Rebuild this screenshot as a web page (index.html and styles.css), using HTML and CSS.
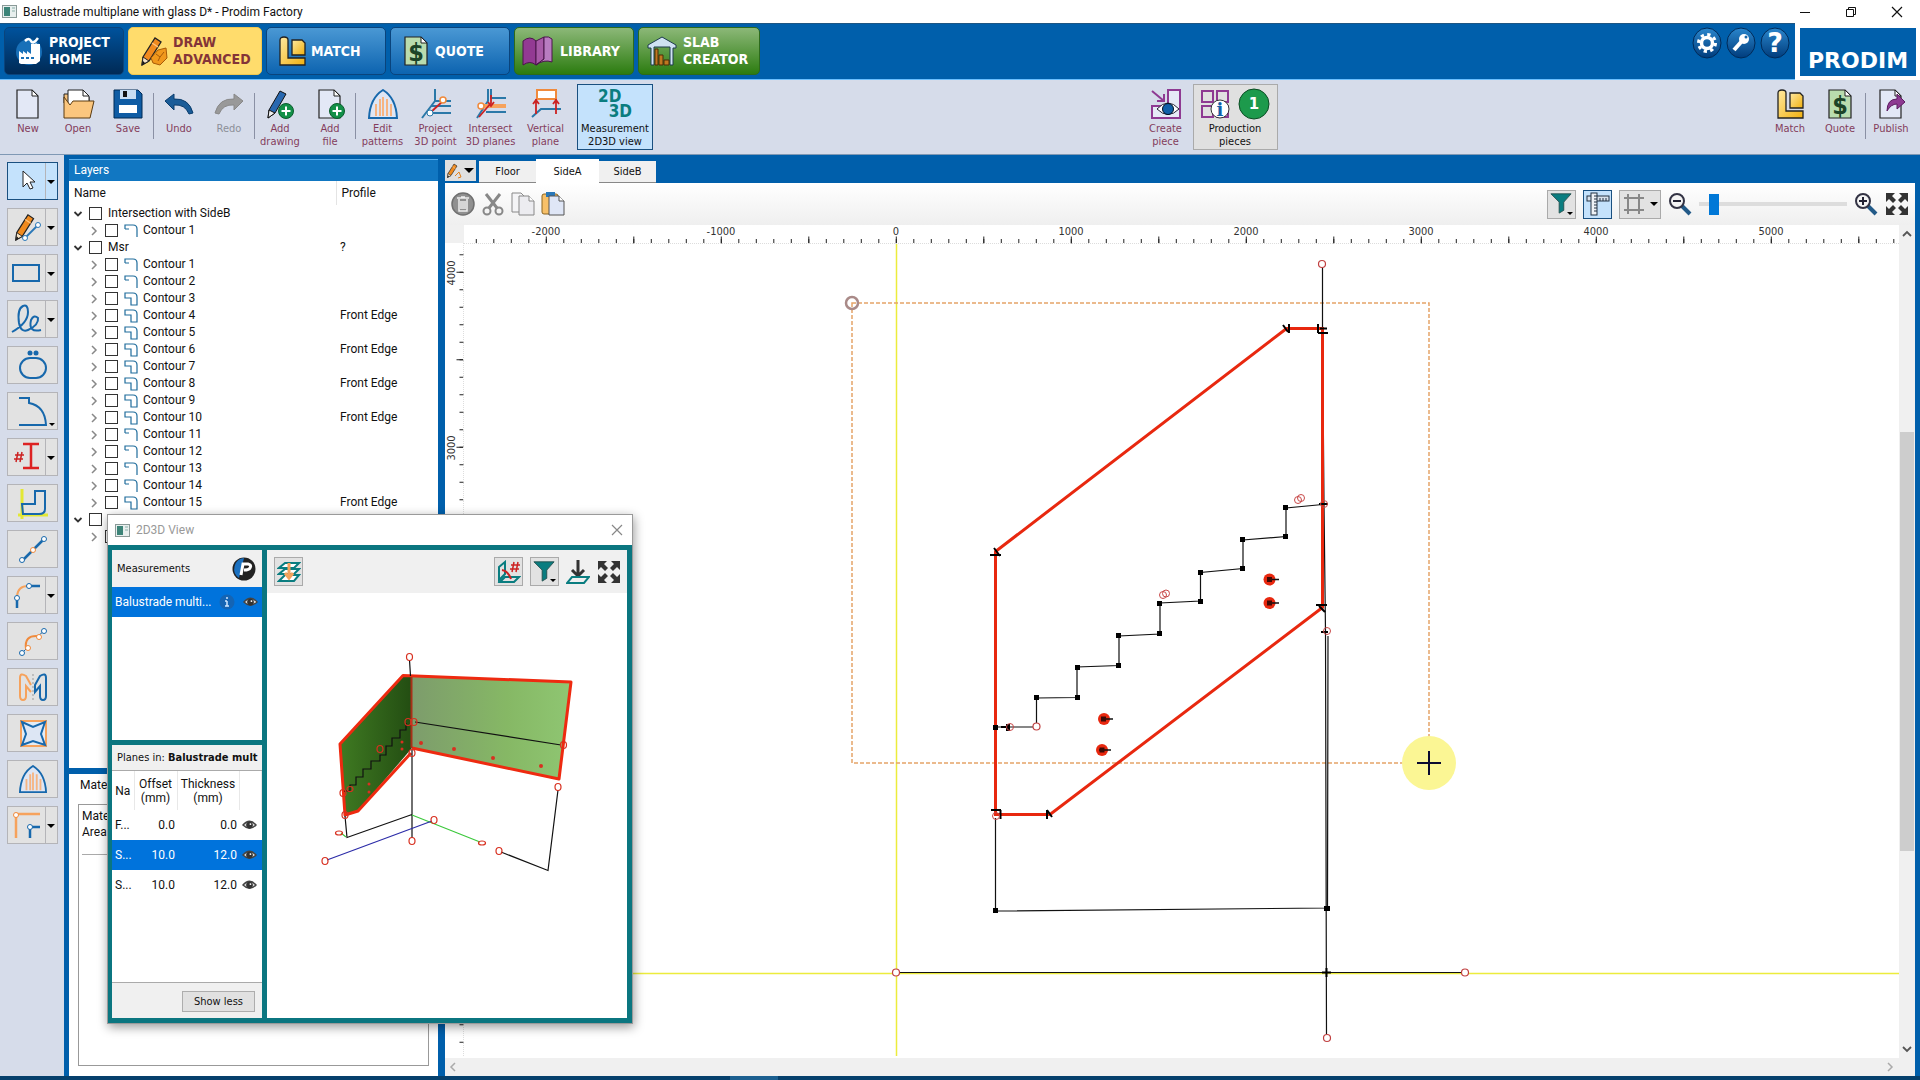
FILE: index.html
```html
<!DOCTYPE html>
<html lang="en">
<head>
    <meta charset="UTF-8">
    <meta name="viewport" content="width=device-width, initial-scale=1.0">
    <title>Balustrade multiplane with glass D* - Prodim Factory</title>
    <link rel="stylesheet" href="styles.css">
</head>
<body>
    <!-- shared icons -->
    <svg class="defs" width="0" height="0">
        <defs>
            <linearGradient id="gold" x1="0" y1="0" x2="1" y2="1"><stop offset="0" stop-color="#ffe9a0"/><stop offset="1" stop-color="#f0b010"/></linearGradient>
            <linearGradient id="ball" x1="0" y1="0" x2="0" y2="1"><stop offset="0" stop-color="#2a86cc"/><stop offset="1" stop-color="#003c7c"/></linearGradient>
            <linearGradient id="leftGlass" x1="0" y1="0" x2="1" y2="0"><stop offset="0" stop-color="#3f7a22"/><stop offset="1" stop-color="#234d12"/></linearGradient>
            <linearGradient id="rightGlass" x1="0" y1="0" x2="1" y2="0"><stop offset="0" stop-color="#7d9c6c"/><stop offset="0.6" stop-color="#86b865"/><stop offset="1" stop-color="#8fc672"/></linearGradient>
            <symbol id="i-app" viewBox="0 0 15 13"><rect x="0.5" y="0.5" width="14" height="12" fill="#e8efee" stroke="#8a9a98"/><rect x="2" y="2" width="6" height="9" fill="#3c8478"/><path d="M10 3h3M10 6h3" stroke="#8ab0aa"/></symbol>
            <symbol id="i-match" viewBox="0 0 30 30"><path d="M3 4Q3 1 7 1T11 4V22H28V29H3z" fill="url(#gold)" stroke="#222" stroke-width="1.3"/><path d="M15 4h10l3 3v12H15z" fill="url(#gold)" stroke="#222" stroke-width="1.3"/></symbol>
            <symbol id="i-quote" viewBox="0 0 30 30"><path d="M4 1h16l6 6v22H4z" fill="#b9dcae" stroke="#222" stroke-width="1.2"/><path d="M20 1v6h6z" fill="#fff" stroke="#222"/><text x="15" y="25" text-anchor="middle" class="dollar">$</text></symbol>
            <symbol id="i-page" viewBox="0 0 30 30"><path d="M4 1h15l6 6v22H4z" fill="#e3e8f6" stroke="#222" stroke-width="1.2"/><path d="M19 1v6h6z" fill="#fff" stroke="#222"/></symbol>
            <symbol id="i-pencil" viewBox="0 0 30 30"><path d="M4 21L16 2l6 4L10 25l-7 4z" fill="#f08a1e" stroke="#222" stroke-width="1.3"/><path d="M4 21l6 4-7 4z" fill="#f6e2c4" stroke="#222"/><path d="M3 29l1-4 2 2z" fill="#111"/><path d="M13 7l6 4" stroke="#ffc27a" stroke-width="1.5"/></symbol>
            <symbol id="i-plus" viewBox="0 0 16 16"><circle cx="8" cy="8" r="7.5" fill="#129048" stroke="#0a5c2c"/><path d="M8 3.500v9M3.500 8h9" stroke="#fff" stroke-width="2"/></symbol>
            <symbol id="i-arch" viewBox="0 0 30 30"><path d="M1 29Q2 9 15 1Q28 9 29 29z" fill="#dfe6f4" stroke="#1768ac" stroke-width="2"/><path d="M8 27V15M12 27V10M15 27V8M19 27V10M23 27V15" stroke="#f6b482" stroke-width="2"/></symbol>
            <symbol id="i-open" viewBox="0 0 14 14"><path d="M1 5V1h8q4 0 4 4v8M1 5h4" fill="none" stroke="#1f6c9c" stroke-width="1.2"/></symbol>
            <symbol id="i-closed" viewBox="0 0 14 14"><path d="M1 6V1h8q4 0 4 4v8H7V6z" fill="none" stroke="#1f6c9c" stroke-width="1.2"/></symbol>
            <symbol id="i-down" viewBox="0 0 10 10"><path d="M1.500 3L5 6.500 8.500 3" fill="none" stroke="#333" stroke-width="1.8"/></symbol>
            <symbol id="i-right" viewBox="0 0 10 10"><path d="M3 1l4 4-4 4" fill="none" stroke="#888" stroke-width="1.5"/></symbol>
            <symbol id="i-eye" viewBox="0 0 16 12"><path d="M1 6Q8-2 15 6Q8 13 1 6z" fill="#ddd" stroke="#444" stroke-width="1.4"/><circle cx="8" cy="6" r="3.600" fill="#333"/><circle cx="9" cy="5" r="1" fill="#fff"/></symbol>
            <symbol id="i-funnel" viewBox="0 0 24 24"><path d="M1 2h22l-8 9v9l-5 3V11z" fill="#0a7d80" stroke="#24504f"/></symbol>
            <symbol id="i-expand" viewBox="0 0 24 24"><path d="M1 1h9L7 4l4 4-3 3-4-4-3 3zM23 1h-9l3 3-4 4 3 3 4-4 3 3zM1 23h9l-3-3 4-4-3-3-4 4-3-3zM23 23h-9l3-3-4-4 3-3 4 4 3-3z" fill="#333"/></symbol>
            <symbol id="i-hash" viewBox="0 0 10 12"><path d="M4 1L2 11M8 1L6 11M1 4h9M0 8h9" stroke="#c22" stroke-width="1.5"/></symbol>
        </defs>
    </svg>

    <header class="titlebar">
        <svg class="app-icon"><use href="#i-app"/></svg>
        <h1>Balustrade multiplane with glass D* - Prodim Factory</h1>
        <div class="window-buttons">
            <button aria-label="Minimize"><svg width="12" height="12"><path d="M1 6.500h10" stroke="#111"/></svg></button>
            <button aria-label="Restore"><svg width="12" height="12"><path d="M1.500 3.500h7v7h-7zM3.500 3V1.500h7v7H9" fill="none" stroke="#111"/></svg></button>
            <button aria-label="Close"><svg width="12" height="12"><path d="M1 1l10 10M11 1L1 11" stroke="#111" stroke-width="1.200"/></svg></button>
        </div>
    </header>

    <nav class="modes">
        <button class="mode home"><svg class="icon"><circle cx="14" cy="16" r="13" fill="#1870b8"/><path d="M4 27V15l4 3v-3l4 3v-3l4 3V8h4l1-1 1 1h3v17l-4 3H6z" fill="#fff"/><path d="M10 5q4-4 6 0t7-3" stroke="#fff" stroke-width="2.500" fill="none"/><path d="M6 22h3M11 22h3M16 22h3" stroke="#1870b8" stroke-width="2"/></svg><span>PROJECT<br>HOME</span></button>
        <button class="mode draw"><svg class="icon"><use href="#i-pencil" width="30" height="30"/><path d="M12 22l7-8 8-2 1 10-7 7-7-2z" fill="#f0981c" stroke="#a65a08"/><path d="M17 18l4 3 4-5M19 25l2-4" stroke="#a65a08" fill="none"/></svg><span>DRAW<br>ADVANCED</span></button>
        <button class="mode"><svg class="icon"><use href="#i-match" width="30" height="30"/></svg><span>MATCH</span></button>
        <button class="mode"><svg class="icon"><use href="#i-quote" width="30" height="30"/></svg><span>QUOTE</span></button>
        <button class="mode green library"><svg class="icon"><path d="M1 5q7-6 13 0v24q-6-5-13 0z" fill="#933a93" stroke="#4b144b"/><path d="M14 5l8-4v22l-8 6z" fill="#a85aa8" stroke="#4b144b"/><path d="M22 1q5-1 8 2v23q-8-3-16 3l8-6z" fill="#b87cc0" stroke="#4b144b"/></svg><span>LIBRARY</span></button>
        <button class="mode green slab"><svg class="icon"><path d="M1 9L15 1l14 8v3h-3v17h-3V11H7v18H4V12H1z" fill="#cfe2f2" stroke="#1d3a4c"/><path d="M8 13h3v16H8zM12 19h4v10h-4zM17 24h5v5h-5z" fill="#c07820" stroke="#4a2c08"/></svg><span>SLAB<br>CREATOR</span></button>
        <div class="help">
            <button aria-label="Settings"><svg width="30" height="32"><ellipse cx="15" cy="16" rx="14" ry="15" fill="url(#ball)" stroke="#002a58"/><circle cx="15" cy="16" r="5.500" fill="none" stroke="#fff" stroke-width="3.500"/><circle cx="15" cy="16" r="8.500" fill="none" stroke="#fff" stroke-width="3" stroke-dasharray="3.300 3.370"/></svg></button>
            <button aria-label="License"><svg width="30" height="32"><ellipse cx="15" cy="16" rx="14" ry="15" fill="url(#ball)" stroke="#002a58"/><circle cx="18" cy="12" r="5" fill="#fff"/><path d="M16 14l-8 9" stroke="#fff" stroke-width="4"/><circle cx="20" cy="10" r="1.500" fill="#1768ac"/></svg></button>
            <button aria-label="Help"><svg width="30" height="32"><ellipse cx="15" cy="16" rx="14" ry="15" fill="url(#ball)" stroke="#002a58"/><text x="15" y="25" text-anchor="middle" class="question">?</text></svg></button>
        </div>
        <div class="brand"><strong>PRODIM</strong></div>
    </nav>

    <div class="toolbar">
        <div class="group">
            <button class="tool"><svg class="icon"><use href="#i-page" width="30" height="30"/></svg>New</button>
            <button class="tool"><svg class="icon"><path d="M1 5h5l2 3h18v6H1z" fill="#f7c27c" stroke="#222"/><path d="M5 1h15l6 6v10H5z" fill="#fff" stroke="#222"/><path d="M20 1v6h6" fill="none" stroke="#222"/><path d="M1 8v21h26l4-17H10l-3 4z" fill="#fbc67e" stroke="#5a3a10"/></svg>Open</button>
            <button class="tool"><svg class="icon"><path d="M1 1h24l4 4v24H1z" fill="#0f5ca4" stroke="#002a55"/><rect x="7" y="1" width="16" height="9" fill="#c8ddf2"/><rect x="10" y="2" width="4" height="6" fill="#111"/><rect x="6" y="16" width="18" height="8" fill="#fff"/></svg>Save</button>
            <hr>
            <button class="tool"><svg class="icon"><path d="M1 12L10 5v5q15-1 19 14l-4 1Q21 15 10 16v5z" fill="#1a5c98" stroke="#0a3c6c"/></svg>Undo</button>
            <button class="tool disabled" disabled><svg class="icon"><path d="M29 12L20 5v5Q5 9 1 24l4 1Q9 15 20 16v5z" fill="#999" stroke="#888"/></svg>Redo</button>
            <hr>
            <button class="tool"><svg class="icon"><path d="M4 21L15 2l6 3L10 24l-7 5z" fill="#2868b0" stroke="#111"/><path d="M4 21l6 3-7 5z" fill="#eee" stroke="#111"/><use href="#i-plus" x="13" y="14" width="16" height="16"/></svg>Add<br>drawing</button>
            <button class="tool"><svg class="icon"><use href="#i-page" width="30" height="30"/><use href="#i-plus" x="14" y="14" width="16" height="16"/></svg>Add<br>file</button>
            <hr>
            <button class="tool roomy"><svg class="icon"><use href="#i-arch" width="30" height="30"/></svg>Edit<br>patterns</button>
            <button class="tool roomy"><svg class="icon"><path d="M14 0v12h16M14 12L1 29M10 17h20M6 24h24" stroke="#2a78a8" stroke-width="2" fill="none"/><path d="M10 23L22 12" stroke="#c22" stroke-width="1.800"/><circle cx="22" cy="11" r="3" fill="#fff" stroke="#f08a3c" stroke-width="1.500"/><circle cx="9" cy="24" r="3" fill="#fff" stroke="#2a78a8"/></svg>Project<br>3D point</button>
            <button class="tool intersect"><svg class="icon"><path d="M15 0v9h15M12 0v12L1 29M10 23h20" stroke="#2a78a8" stroke-width="2" fill="none"/><path d="M5 17h25" stroke="#f6a25c" stroke-width="4"/><circle cx="5" cy="17" r="3" fill="#fff" stroke="#f08a3c" stroke-width="1.500"/><path d="M3 28L15 14V6M12 13l3 4 3-4" stroke="#c22" stroke-width="1.800" fill="none"/></svg>Intersect<br>3D planes</button>
            <button class="tool roomy"><svg class="icon"><path d="M1 28L10 20H30" stroke="#2a78a8" stroke-width="2" fill="none"/><rect x="6" y="1" width="19" height="9" fill="#fff" stroke="#f08a3c" stroke-width="2"/><path d="M5 25V10M25 25V10M2 15l3-4 3 4M22 15l3-4 3 4" stroke="#c22" stroke-width="1.800" fill="none"/></svg>Vertical<br>plane</button>
            <button class="tool active"><span class="dims"><b>2D</b><b>3D</b></span>Measurement<br>2D3D view</button>
        </div>
        <div class="group">
            <button class="tool"><svg class="icon"><path d="M17 1h12v28H1V17h16z" fill="#e6eaf6" stroke="#8e3a92" stroke-width="2"/><path d="M1 2l12 10M13 5v7H6" stroke="#8e3a92" stroke-width="2" fill="none"/><path d="M6 20q11-12 22 0q-11 11-22 0z" fill="#fff" stroke="#223"/><circle cx="17" cy="20" r="5.500" fill="#1060a8" stroke="#012"/></svg>Create<br>piece</button>
            <button class="tool pieces"><svg class="icon double"><path d="M2 2h11v11H2zM17 2h11v11H17zM2 17h11v11H2zM17 17h11v11H17z" fill="none" stroke="#8e3a92" stroke-width="2"/><circle cx="20" cy="20" r="9" fill="#fff" stroke="#333"/><text x="20" y="27" text-anchor="middle" class="info">i</text><circle cx="54" cy="15" r="15" fill="#1d9a4c" stroke="#0c4c24"/><text x="54" y="20" text-anchor="middle" class="count">1</text></svg>Production<br>pieces</button>
        </div>
        <div class="group">
            <button class="tool"><svg class="icon"><use href="#i-match" width="30" height="30"/></svg>Match</button>
            <button class="tool"><svg class="icon"><use href="#i-quote" width="30" height="30"/></svg>Quote</button>
            <hr>
            <button class="tool"><svg class="icon"><use href="#i-page" width="30" height="30"/><path d="M11 22q0-12 10-12V5l8 8-8 7v-5q-6 0-10 7z" fill="#8e3a92" stroke="#5c1c60"/></svg>Publish</button>
        </div>
    </div>

    <main class="workspace">
        <aside class="sidebar">
            <button class="side drop active" aria-label="Select"><svg class="face"><path d="M11 4v16l4-4 3 6 3-1-3-6h5z" fill="#fff" stroke="#222"/></svg></button>
            <button class="side drop" aria-label="Draw"><svg class="face"><use href="#i-pencil" x="1" y="0" width="28" height="28"/><path d="M14 24L25 13" stroke="#2a78b8" stroke-width="1.800"/><circle cx="13" cy="25" r="2.500" fill="#fff" stroke="#2a78b8"/><circle cx="26" cy="12" r="2.500" fill="#fff" stroke="#2a78b8"/></svg></button>
            <button class="side drop" aria-label="Rectangle"><svg class="face"><rect x="1" y="6" width="26" height="16" fill="none" stroke="#1768ac" stroke-width="2"/></svg></button>
            <button class="side drop" aria-label="Freehand"><svg class="face"><path d="M0 27Q16 18 16 7Q16-1 11 1Q5 4 7 18Q9 28 16 25Q27 20 26 13Q22 9 19 15Q16 28 29 25" fill="none" stroke="#1768ac" stroke-width="2"/></svg></button>
            <button class="side" aria-label="Closed shape"><svg class="face"><circle cx="12" cy="2" r="2.500" fill="#1768ac"/><circle cx="18" cy="2" r="2.500" fill="#1768ac"/><rect x="2" y="7" width="26" height="20" rx="10" fill="none" stroke="#1768ac" stroke-width="2"/></svg></button>
            <button class="side" aria-label="Profile"><svg class="face"><path d="M1 1h10v5q16 3 17 22H1" fill="none" stroke="#1768ac" stroke-width="2"/></svg><i class="corner"></i></button>
            <button class="side drop" aria-label="Dimension"><svg class="face"><path d="M11 1h16M19 1v24M11 25h16" stroke="#d22" stroke-width="2.500"/><use href="#i-hash" x="2" y="8" width="10" height="12"/></svg></button>
            <button class="side" aria-label="Align axes"><svg class="face"><path d="M4 0v30M0 26h30" stroke="#e3e834" stroke-width="3"/><path d="M4 15h13V2h10v18q0 5-6 5H5z" fill="none" stroke="#1768ac" stroke-width="2"/></svg></button>
            <button class="side" aria-label="Line"><svg class="face"><path d="M4 26L26 4" stroke="#1768ac" stroke-width="2.500"/><circle cx="4" cy="25" r="2.500" fill="#fff" stroke="#1768ac"/><circle cx="15" cy="15" r="2.500" fill="#fff" stroke="#f08a3c"/><circle cx="26" cy="4" r="2.500" fill="#fff" stroke="#1768ac"/></svg></button>
            <button class="side drop" aria-label="Fillet"><svg class="face"><path d="M5 15Q6 5 16 5" stroke="#f6a25c" stroke-width="2" fill="none"/><path d="M18 5h10M5 17v10" stroke="#1768ac" stroke-width="2.500"/><circle cx="17" cy="5" r="2.500" fill="#fff" stroke="#1768ac"/><circle cx="5" cy="17" r="2.500" fill="#fff" stroke="#1768ac"/></svg></button>
            <button class="side" aria-label="Spline"><svg class="face"><path d="M8 22Q6 8 20 9" stroke="#f08a3c" stroke-width="2" fill="none"/><path d="M4 26l6-6M20 9l6-5" stroke="#1768ac"/><circle cx="4" cy="26" r="2.500" fill="#fff" stroke="#1768ac"/><circle cx="10" cy="21" r="2.500" fill="#fff" stroke="#f08a3c"/><circle cx="21" cy="10" r="2.500" fill="#fff" stroke="#f08a3c"/><circle cx="26" cy="4" r="2.500" fill="#fff" stroke="#1768ac"/></svg></button>
            <button class="side" aria-label="Mirror"><svg class="face"><path d="M13 12L8 3Q2-1 2 5v18q0 4 3 4t3-4V13l5 6" fill="none" stroke="#f6a25c" stroke-width="2"/><path d="M15 1v26" stroke="#999" stroke-dasharray="2 2"/><path d="M17 12l5-9q6-4 6 2v18q0 4-3 4t-3-4V13l-5 6z" fill="none" stroke="#1768ac" stroke-width="2"/></svg></button>
            <button class="side" aria-label="Bounding box"><svg class="face"><rect x="3" y="2" width="25" height="25" fill="#e2ecf6" stroke="#f6a25c" stroke-width="2"/><path d="M4 3l11 5 12-5-4 12 4 11-12-4-11 4 4-11z" fill="#dde6f4" stroke="#1768ac" stroke-width="2"/></svg></button>
            <button class="side" aria-label="Pattern"><svg class="face"><use href="#i-arch" x="1" y="0" width="28" height="28"/></svg></button>
            <button class="side drop" aria-label="Offset"><svg class="face"><path d="M4 27V3h24" stroke="#f6a25c" stroke-width="2.500" fill="none"/><path d="M18 27V16h10" stroke="#1768ac" stroke-width="2.500" fill="none"/><circle cx="4" cy="4" r="2.500" fill="#fff" stroke="#f08a3c"/><circle cx="18" cy="16" r="2.500" fill="#fff" stroke="#1768ac"/></svg></button>
        </aside>

        <section class="panels">
            <div class="layers">
                <h2>Layers</h2>
                <table>
                    <thead><tr><th>Name</th><th class="profile">Profile</th></tr></thead>
                    <tbody>
                        <tr><td><label><svg class="chev"><use href="#i-down"/></svg><input type="checkbox">Intersection with SideB</label></td><td></td></tr>
                        <tr><td><label class="child"><svg class="chev"><use href="#i-right"/></svg><input type="checkbox"><svg class="shape"><use href="#i-open"/></svg>Contour 1</label></td><td></td></tr>
                        <tr><td><label><svg class="chev"><use href="#i-down"/></svg><input type="checkbox">Msr</label></td><td>?</td></tr>
                        <tr><td><label class="child"><svg class="chev"><use href="#i-right"/></svg><input type="checkbox"><svg class="shape"><use href="#i-open"/></svg>Contour 1</label></td><td></td></tr>
                        <tr><td><label class="child"><svg class="chev"><use href="#i-right"/></svg><input type="checkbox"><svg class="shape"><use href="#i-open"/></svg>Contour 2</label></td><td></td></tr>
                        <tr><td><label class="child"><svg class="chev"><use href="#i-right"/></svg><input type="checkbox"><svg class="shape"><use href="#i-closed"/></svg>Contour 3</label></td><td></td></tr>
                        <tr><td><label class="child"><svg class="chev"><use href="#i-right"/></svg><input type="checkbox"><svg class="shape"><use href="#i-closed"/></svg>Contour 4</label></td><td>Front Edge</td></tr>
                        <tr><td><label class="child"><svg class="chev"><use href="#i-right"/></svg><input type="checkbox"><svg class="shape"><use href="#i-closed"/></svg>Contour 5</label></td><td></td></tr>
                        <tr><td><label class="child"><svg class="chev"><use href="#i-right"/></svg><input type="checkbox"><svg class="shape"><use href="#i-closed"/></svg>Contour 6</label></td><td>Front Edge</td></tr>
                        <tr><td><label class="child"><svg class="chev"><use href="#i-right"/></svg><input type="checkbox"><svg class="shape"><use href="#i-closed"/></svg>Contour 7</label></td><td></td></tr>
                        <tr><td><label class="child"><svg class="chev"><use href="#i-right"/></svg><input type="checkbox"><svg class="shape"><use href="#i-closed"/></svg>Contour 8</label></td><td>Front Edge</td></tr>
                        <tr><td><label class="child"><svg class="chev"><use href="#i-right"/></svg><input type="checkbox"><svg class="shape"><use href="#i-closed"/></svg>Contour 9</label></td><td></td></tr>
                        <tr><td><label class="child"><svg class="chev"><use href="#i-right"/></svg><input type="checkbox"><svg class="shape"><use href="#i-closed"/></svg>Contour 10</label></td><td>Front Edge</td></tr>
                        <tr><td><label class="child"><svg class="chev"><use href="#i-right"/></svg><input type="checkbox"><svg class="shape"><use href="#i-open"/></svg>Contour 11</label></td><td></td></tr>
                        <tr><td><label class="child"><svg class="chev"><use href="#i-right"/></svg><input type="checkbox"><svg class="shape"><use href="#i-open"/></svg>Contour 12</label></td><td></td></tr>
                        <tr><td><label class="child"><svg class="chev"><use href="#i-right"/></svg><input type="checkbox"><svg class="shape"><use href="#i-open"/></svg>Contour 13</label></td><td></td></tr>
                        <tr><td><label class="child"><svg class="chev"><use href="#i-right"/></svg><input type="checkbox"><svg class="shape"><use href="#i-open"/></svg>Contour 14</label></td><td></td></tr>
                        <tr><td><label class="child"><svg class="chev"><use href="#i-right"/></svg><input type="checkbox"><svg class="shape"><use href="#i-closed"/></svg>Contour 15</label></td><td>Front Edge</td></tr>
                        <tr><td><label><svg class="chev"><use href="#i-down"/></svg><input type="checkbox" aria-label="Layer group"></label></td><td></td></tr>
                        <tr><td><label class="child"><svg class="chev"><use href="#i-right"/></svg><input type="checkbox" aria-label="Layer"></label></td><td></td></tr>
                    </tbody>
                </table>
            </div>
            <div class="material">
                <h2>Mater</h2>
                <div class="material-box">
                    <p>Mate<br>Area</p>
                    <hr>
                </div>
            </div>
        </section>

        <section class="drawing">
            <div class="tabs">
                <button class="tab-menu" aria-label="Drawing mode"><svg width="16" height="16"><use href="#i-pencil" width="15" height="15"/><path d="M9 13l4-4 2 5-3 1" fill="none" stroke="#e0801c"/></svg><i class="arrow"></i></button>
                <button class="tab">Floor</button>
                <button class="tab current">SideA</button>
                <button class="tab">SideB</button>
            </div>
            <div class="canvas-tools">
                <button class="flat" aria-label="Delete"><svg class="face"><circle cx="12" cy="12" r="11" fill="#909090" stroke="#707070" stroke-width="1.500"/><path d="M6 6h12M8 7v12h8V7M10 9v8M12 9v8M14 9v8M10 5h4" stroke="#eee" stroke-width="1.500" fill="none"/></svg></button>
                <button class="flat" aria-label="Cut"><svg class="face"><path d="M5 2l11 14M19 2L8 16" stroke="#888" stroke-width="3"/><circle cx="6" cy="19" r="3.500" fill="none" stroke="#888" stroke-width="2"/><circle cx="18" cy="19" r="3.500" fill="none" stroke="#888" stroke-width="2"/></svg></button>
                <button class="flat" aria-label="Copy"><svg class="face"><path d="M1 1h9l4 4v15H1z" fill="#f4f4f6" stroke="#888"/><path d="M8 4h10l5 5v14H8z" fill="#ececf0" stroke="#888"/><path d="M18 4v5h5" fill="#fff" stroke="#888"/></svg></button>
                <button class="flat" aria-label="Paste"><svg class="face"><rect x="1" y="2" width="16" height="20" rx="2" fill="#f7c068" stroke="#8a6420"/><rect x="5" y="0" width="9" height="5" fill="#2a78b8"/><path d="M8 4h10l5 5v14H8z" fill="#dfe6f6" stroke="#555"/><path d="M18 4v5h5" fill="#fff" stroke="#555"/></svg></button>
                <div class="view-tools">
                    <button class="boxed" aria-label="Filter"><svg class="face"><use href="#i-funnel" width="22" height="22"/></svg><i class="corner"></i></button>
                    <button class="boxed active" aria-label="Rulers"><svg class="face"><rect x="1" y="4" width="22" height="5" fill="#d9e2ec" stroke="#234"/><rect x="5" y="1" width="6" height="22" fill="#eef2f6" stroke="#234"/><path d="M8 4h3M8 7h3M8 10h3M8 13h3M8 16h3M8 19h3M14 6v3M17 6v3M20 6v3" stroke="#234"/></svg></button>
                    <button class="boxed split" aria-label="Grid"><svg class="face"><path d="M6 2v20M17 2v20M2 6h20M2 18h20" stroke="#888" stroke-width="2"/></svg><i class="arrow"></i></button>
                    <button class="flat" aria-label="Zoom out"><svg class="face"><path d="M14 14l8 8" stroke="#225a88" stroke-width="4"/><circle cx="9" cy="9" r="7" fill="#f4f4f4" stroke="#334" stroke-width="2"/><path d="M5 9h8" stroke="#223" stroke-width="2"/></svg></button>
                    <input type="range" min="0" max="100" value="7" aria-label="Zoom">
                    <button class="flat" aria-label="Zoom in"><svg class="face"><path d="M14 14l8 8" stroke="#225a88" stroke-width="4"/><circle cx="9" cy="9" r="7" fill="#f4f4f4" stroke="#334" stroke-width="2"/><path d="M5 9h8M9 5v8" stroke="#223" stroke-width="2"/></svg></button>
                    <button class="flat" aria-label="Fit"><svg class="face"><use href="#i-expand" width="24" height="24"/></svg></button>
                </div>
            </div>
            <div class="canvas">
                <svg class="plan">
                    <g transform="translate(-445 -225)">
                        <rect x="445" y="225" width="19" height="18" fill="#f0f0f0"/>
                        <!-- rulers: 175px per metre, a tick every 100mm -->
                        <g stroke="#222">
                            <path d="M475.800 241H1899" stroke-width="4" stroke-dasharray="1 16.500"/>
                            <path d="M545.800 240H1899" stroke-width="7" stroke-dasharray="1 86.500"/>
                            <path d="M461.500 254.300V1056" stroke-width="4" stroke-dasharray="1 16.500"/>
                            <path d="M460 271.800V1056" stroke-width="7" stroke-dasharray="1 86.500"/>
                        </g>
                        <path d="M464 243.500H1899M463.500 243V1056" stroke="#ddd" stroke-dasharray="1 1"/>
                        <g class="ruler-text">
                            <text x="546" y="235">-2000</text>
                            <text x="721" y="235">-1000</text>
                            <text x="896" y="235">0</text>
                            <text x="1071" y="235">1000</text>
                            <text x="1246" y="235">2000</text>
                            <text x="1421" y="235">3000</text>
                            <text x="1596" y="235">4000</text>
                            <text x="1771" y="235">5000</text>
                            <text transform="translate(455 273) rotate(-90)">4000</text>
                            <text transform="translate(455 448) rotate(-90)">3000</text>
                        </g>
                        <!-- axes -->
                        <path d="M896.500 244V1056M464 973.500H1899" stroke="#ecec3c" stroke-width="1.500"/>
                        <!-- selection rectangle -->
                        <rect x="852" y="303" width="577" height="460" fill="none" stroke="#e5a468" stroke-width="1.500" stroke-dasharray="4 2"/>
                        <circle cx="852" cy="303" r="6" fill="none" stroke="#a98a88" stroke-width="2.500"/>
                        <circle cx="1429" cy="763" r="27" fill="#fbf694"/>
                        <path d="M1417 763h24M1429 751v24" stroke="#0a0a30" stroke-width="2"/>
                        <!-- measured lines -->
                        <g fill="none" stroke="#111" stroke-width="1.200">
                            <path d="M1322.500 267V328L1324 504L1325.500 632L1326.500 1034"/>
                            <path d="M1328 636L1327.500 908L995.500 911V818"/>
                            <path d="M900 972.500H1461"/>
                            <path d="M996 727H1033M1036.500 723V698L1077 697.500V667L1119 665.500V636L1160 634V603L1200.500 601V572.500L1243 568.500V540L1286 536.500V508L1328 504"/>
                        </g>
                        <path d="M1286.500 328.500H1322.500V607.500L1050 814.500H995.500V551.500z" fill="none" stroke="#e8280f" stroke-width="3"/>
                        <!-- point markers -->
                        <g fill="#000">
                            <path d="M1034 695h5v5h-5zM1075 695h5v5h-5zM1075 665h5v5h-5zM1116 663h5v5h-5zM1116 633h5v5h-5zM1157 631h5v5h-5zM1157 601h5v5h-5zM1198 599h5v5h-5zM1198 570h5v5h-5zM1240 566h5v5h-5zM1240 537h5v5h-5zM1283 534h5v5h-5zM1283 505h5v5h-5zM993 725h5v5h-5zM993 908h5v5h-5zM1324 906h6v5h-6zM1006 724h4v7h-4z"/>
                        </g>
                        <path d="M990 555h11M994 548l6 8M1283 325l5 7M1289 324v9M1318 324v9M1320 328.500h7M1318 333h10M1316 605h11M1319 606l6 6M1319 504h9M1321 632h7M991 810h10M1000.500 810v9M1047 810v9M1047 810l5 7M1322 972.500h9M1326.500 968v9M1001 727h8" stroke="#000" stroke-width="2" fill="none"/>
                        <g fill="#fff" stroke="#c04040" stroke-width="1.200">
                            <circle cx="1322" cy="264" r="3.500"/><circle cx="1327" cy="1038" r="3.500"/>
                            <circle cx="896" cy="972.500" r="3.500"/><circle cx="1465" cy="972.500" r="3.500"/>
                            <circle cx="1036.500" cy="726.500" r="3.500"/>
                        </g>
                        <g fill="none" stroke="#c84848">
                            <circle cx="1298" cy="500" r="3.500"/><circle cx="1301" cy="498" r="3.500"/>
                            <circle cx="1163" cy="595" r="3.500"/><circle cx="1166" cy="593.500" r="3.500"/>
                            <circle cx="1327" cy="631" r="3.500"/><circle cx="1010" cy="727" r="3.500"/><circle cx="996" cy="816" r="3.500"/><circle cx="1324" cy="504" r="3.500"/>
                        </g>
                        <g fill="#e8280f">
                            <circle cx="1269.500" cy="579.500" r="6"/><circle cx="1269.500" cy="603" r="6"/><circle cx="1104" cy="719" r="6"/><circle cx="1102" cy="750" r="6"/>
                        </g>
                        <path d="M1267 579.500h12M1267 603h12M1101 719h12M1099 750h12" stroke="#111" stroke-width="1.500"/>
                        <path d="M1267 577h5v5h-5zM1267 600.500h5v5h-5zM1101 716.500h5v5h-5zM1099.500 747.500h5v5h-5z" fill="#3c0a06"/>
                    </g>
                </svg>
                <div class="scroll-y">
                    <svg width="10" height="10"><path d="M1 7l4-4 4 4" fill="none" stroke="#555" stroke-width="1.800"/></svg>
                    <div class="track"><div class="thumb"></div></div>
                    <svg width="10" height="10"><path d="M1 3l4 4 4-4" fill="none" stroke="#555" stroke-width="1.800"/></svg>
                </div>
                <div class="scroll-x">
                    <svg width="10" height="10"><path d="M7 1L3 5l4 4" fill="none" stroke="#aaa" stroke-width="1.500"/></svg>
                    <svg width="10" height="10"><path d="M3 1l4 4-4 4" fill="none" stroke="#aaa" stroke-width="1.500"/></svg>
                </div>
            </div>
        </section>
    </main>

    <footer class="taskbar"><span></span></footer>

    <!-- floating 2D3D window -->
    <section class="view-window">
        <div class="view-title">
            <svg class="app-icon"><use href="#i-app"/></svg>
            <h2>2D3D View</h2>
            <button aria-label="Close view"><svg width="12" height="12"><path d="M1 1l10 10M11 1L1 11" stroke="#888" stroke-width="1.200"/></svg></button>
        </div>
        <div class="view-body">
            <div class="view-left">
                <div class="measurements">
                    <div class="view-head"><h3>Measurements</h3><svg width="24" height="24"><circle cx="12" cy="12" r="11.500" fill="#222"/><path d="M12 1a11 11 0 0 0-5 20z" fill="#1a70c0"/><path d="M9 18l2-11h5q4 1 2 4-1 2-6 2" fill="none" stroke="#fff" stroke-width="3"/></svg></div>
                    <div class="measure-row"><span>Balustrade multi...</span><svg width="16" height="16"><circle cx="8" cy="8" r="7.500" fill="#1464b4"/><path d="M8 7v5M8 3v2M6 12h4M6 7h2" stroke="#cfe6ff" stroke-width="1.500"/></svg><svg class="eye"><use href="#i-eye"/></svg></div>
                </div>
                <div class="planes">
                    <h3>Planes in: <b>Balustrade mult</b></h3>
                    <table>
                        <thead><tr><th class="na">Na</th><th class="offset">Offset<br>(mm)</th><th class="thick">Thickness<br>(mm)</th><th></th></tr></thead>
                        <tbody>
                            <tr><td>F...</td><td class="num">0.0</td><td class="num">0.0</td><td class="see"><svg class="eye"><use href="#i-eye"/></svg></td></tr>
                            <tr class="selected"><td>S...</td><td class="num">10.0</td><td class="num">12.0</td><td class="see"><svg class="eye"><use href="#i-eye"/></svg></td></tr>
                            <tr><td>S...</td><td class="num">10.0</td><td class="num">12.0</td><td class="see"><svg class="eye"><use href="#i-eye"/></svg></td></tr>
                        </tbody>
                    </table>
                    <div class="view-foot"><button>Show less</button></div>
                </div>
            </div>
            <div class="view-right">
                <div class="view-tools-bar">
                    <button class="boxed first" aria-label="Stack planes"><svg class="face"><path d="M8 3h14l-5 5H2zM8 9h14l-5 5H2zM8 15h14l-5 6H2z" fill="#fff" stroke="#0a7d80" stroke-width="2"/><path d="M12 3v13M8 13l4 5 4-5" stroke="#f6a25c" stroke-width="3" fill="none"/></svg></button>
                    <button class="boxed" aria-label="Plane number"><svg class="face"><path d="M2 7l6-5v12l-6 6zM8 17h14l-5 5H3z" fill="none" stroke="#0a7d80" stroke-width="2"/><path d="M5 10q6 1 9 9" stroke="#c22" stroke-width="2" fill="none"/><use href="#i-hash" x="13" y="1" width="10" height="12"/></svg></button>
                    <button class="boxed" aria-label="Filter view"><svg class="face"><use href="#i-funnel" width="22" height="22"/></svg><i class="corner"></i></button>
                    <button class="flat" aria-label="Drop to plane"><svg class="face"><path d="M12 0v14M6 10l6 6 6-6" stroke="#333" stroke-width="3" fill="none"/><path d="M6 17h17l-5 6H1z" fill="none" stroke="#0a7d80" stroke-width="2"/></svg></button>
                    <button class="flat" aria-label="Fit view"><svg class="face"><use href="#i-expand" width="24" height="24"/></svg></button>
                </div>
                <svg class="model">
                    <g transform="translate(-267 -593)">
                        <path d="M411.500 676L571 682L559 779L412 748z" fill="url(#rightGlass)"/>
                        <path d="M403 675H411.500L412 748L358 811L345 815L340 744z" fill="url(#leftGlass)"/>
                        <path d="M411 753L358 811L345 815L340 744L403 675.500L571 682L559 779L412 748" fill="none" stroke="#ee2a10" stroke-width="3" stroke-linejoin="round"/>
                        <path d="M411.500 677V748" stroke="#a83018" stroke-width="2"/>
                        <g fill="none" stroke="#111" stroke-width="1.200">
                            <path d="M409.500 660L410.500 676M412 750V838M415 722L561 745M345 816L347 837.500L412 814.500M558 790L548 870.500L501 852"/>
                            <path d="M406 723V730H400V738H392V746H386V755H380V761H371V769H363V777H356V785H350V791H344"/>
                        </g>
                        <path d="M412 815L480 842M341 833l5 4" stroke="#3cc83c" stroke-width="1.200"/>
                        <path d="M327 860L432 821" stroke="#2c2ca8" stroke-width="1.200"/>
                        <g fill="none" stroke="#d83020" stroke-width="1.200">
                            <ellipse cx="409.500" cy="657" rx="3" ry="3.500"/><ellipse cx="412" cy="841" rx="3" ry="3.500"/><ellipse cx="412" cy="753" rx="3" ry="3.500"/>
                            <ellipse cx="408" cy="722" rx="3" ry="3.500"/><ellipse cx="414" cy="722" rx="3" ry="3.500"/><ellipse cx="563.500" cy="745" rx="3" ry="3.500"/>
                            <ellipse cx="558" cy="787" rx="3" ry="3.500"/><ellipse cx="499" cy="851" rx="3" ry="3.500"/><ellipse cx="325" cy="861" rx="3" ry="3.500"/>
                            <ellipse cx="434" cy="820" rx="3" ry="3.500"/><ellipse cx="482" cy="843" rx="3.500" ry="2"/><ellipse cx="339" cy="833" rx="3.500" ry="2"/>
                            <ellipse cx="345" cy="815" rx="3" ry="3.500"/><ellipse cx="343" cy="793" rx="3" ry="3.500"/><ellipse cx="380" cy="749" rx="3" ry="3.500"/><ellipse cx="350" cy="789" rx="3" ry="2.500"/>
                        </g>
                        <g fill="#d83020">
                            <circle cx="421" cy="743" r="2"/><circle cx="454" cy="749" r="2"/><circle cx="493" cy="758" r="2"/><circle cx="541" cy="766" r="2"/>
                            <circle cx="402" cy="742" r="1.500"/><circle cx="402" cy="749" r="1.500"/><circle cx="369" cy="784" r="1.500"/><circle cx="369" cy="792" r="1.500"/>
                        </g>
                    </g>
                </svg>
            </div>
        </div>
    </section>
</body>
</html>
```
FILE: styles.css
```css
* {
    box-sizing: border-box;
}

body {
    margin: 0;
    height: 100vh;
    display: flex;
    flex-direction: column;
    overflow: hidden;
    font-family: Roboto, "Open Sans", sans-serif;
    font-size: 12px;
    color: #111;
    background-color: #005fab;
}

h1, h2, h3, p {
    margin: 0;
    font-size: 12px;
    font-weight: normal;
}

button {
    margin: 0;
    padding: 0;
    border: none;
    background: none;
    color: inherit;
    font-family: inherit;
    font-size: inherit;
}

svg {
    display: block;
    flex: none;
}

.defs {
    position: absolute;
}

table {
    border-collapse: collapse;
    table-layout: fixed;
    width: 100%;
}

th, td {
    padding: 0;
    font-weight: normal;
    text-align: left;
}

.arrow, .corner {
    border: 5px solid transparent;
    border-top-color: #000;
    border-bottom: none;
}

.corner {
    position: absolute;
    right: 2px;
    bottom: 3px;
    border-width: 3px;
    border-bottom: none;
}

/* title bar */
.titlebar {
    height: 23px;
    flex: none;
    display: flex;
    align-items: center;
    background-color: #fff;
    padding-left: 2px;
}

.titlebar h1 {
    margin-left: 6px;
}

.app-icon {
    width: 15px;
    height: 13px;
}

.window-buttons {
    margin-left: auto;
    display: flex;
}

.window-buttons button {
    width: 46px;
    height: 21px;
    display: flex;
    align-items: center;
    justify-content: center;
}

/* mode buttons */
.modes {
    height: 57px;
    flex: none;
    display: flex;
    align-items: flex-start;
    gap: 4px;
    padding: 3px 0 0 4px;
    background-color: #005fab;
    border-top: 1px solid #1d5684;
    border-bottom: 1px solid #6cc0ff;
}

.mode {
    width: 120px;
    height: 48px;
    display: flex;
    align-items: center;
    gap: 4px;
    padding-left: 10px;
    border: 1px solid #0a447c;
    border-radius: 5px;
    background: linear-gradient(#4a98d4, #0d64b0);
    color: #fff;
    font-family: "DejaVu Sans Condensed", "DejaVu Sans", sans-serif;
    font-size: 14px;
    font-weight: bold;
    line-height: 17px;
    text-align: left;
}

.icon {
    width: 30px;
    height: 30px;
    overflow: visible;
}

.icon.double {
    width: 70px;
}

.home {
    background: linear-gradient(#00529c, #002a55);
}

.draw {
    width: 134px;
    background: #ffdc6c;
    border-color: #f0c850;
    color: #843438;
}

.green {
    background: linear-gradient(#8cb878, #2c7c10);
    border-color: #2c6a1c;
}

.library {
    padding-left: 7px;
    gap: 8px;
}

.slab {
    width: 122px;
    padding-left: 8px;
    gap: 6px;
}

.help {
    margin-left: auto;
    display: flex;
    gap: 4px;
    margin-right: 1px;
}

.brand {
    width: 125px;
    height: 57px;
    margin-top: -4px;
    padding: 5px 4px 4px 5px;
    background-color: #fff;
}

.brand strong {
    display: block;
    height: 48px;
    padding-top: 20px;
    background-color: #005fab;
    color: #fff;
    font-family: "DejaVu Sans", sans-serif;
    font-size: 22px;
    line-height: 26px;
    text-align: center;
}

/* main toolbar */
.toolbar {
    height: 75px;
    flex: none;
    display: flex;
    justify-content: space-between;
    padding: 4px 4px 0 3px;
    background-color: #d6dcea;
    border-bottom: 1px solid #7f98b4;
}

.group {
    display: flex;
}

.group hr {
    width: 1px;
    height: 46px;
    margin: 9px 0 0;
    border: none;
    background-color: #8a90a4;
}

.tool {
    min-width: 50px;
    height: 66px;
    display: flex;
    flex-direction: column;
    align-items: center;
    padding-top: 4px;
    border: 1px solid transparent;
    color: #843c5c;
    font-family: "DejaVu Sans Condensed", "DejaVu Sans", sans-serif;
    font-size: 11px;
    line-height: 13px;
}

.tool .icon {
    margin-bottom: 3px;
}

.tool.roomy {
    width: 53px;
}

.tool.intersect {
    width: 57px;
}

.tool.disabled {
    color: #8c8f98;
}

.tool.active {
    width: 76px;
    margin-left: 5px;
    background-color: #c4e2fc;
    border-color: #1a5080;
    color: #111;
}

.tool.pieces {
    width: 85px;
    margin-left: 2px;
    background-color: #e0e0e0;
    border-color: #aaa;
    color: #111;
}

.dims {
    width: 34px;
    height: 30px;
    display: flex;
    flex-direction: column;
    margin-bottom: 3px;
    color: #0a7d80;
    font-size: 17px;
    line-height: 15px;
    text-align: left;
}

.dims b + b {
    text-align: right;
}

.dollar {
    font: bold 25px "DejaVu Sans Condensed", sans-serif;
    fill: #1c4428;
}

.question {
    font: bold 27px "DejaVu Sans", sans-serif;
    fill: #fff;
}

.info {
    font: bold 18px "DejaVu Serif", serif;
    fill: #1060a8;
}

.count {
    font: bold 15px "DejaVu Sans", sans-serif;
    fill: #fff;
}

/* workspace */
.workspace {
    flex: 1;
    min-height: 0;
    display: flex;
}

.sidebar {
    width: 64px;
    flex: none;
    display: flex;
    flex-direction: column;
    gap: 8px;
    padding: 7px;
    background-color: #d6dcea;
}

.side {
    position: relative;
    width: 51px;
    height: 38px;
    flex: none;
    display: flex;
    align-items: center;
    justify-content: center;
    border: 1px solid #b4b4b8;
    background-color: #e2e2e2;
}

.side .face {
    width: 30px;
    height: 28px;
    overflow: visible;
}

.side.drop {
    justify-content: flex-start;
    padding-left: 4px;
}

.side.drop::before {
    content: "";
    position: absolute;
    right: 11px;
    top: 0;
    bottom: 0;
    border-left: 1px solid #b4b4b8;
}

.side.drop::after {
    content: "";
    position: absolute;
    right: 2px;
    top: 17px;
    border: 4px solid transparent;
    border-top-color: #000;
    border-bottom: none;
}

.side.active {
    background-color: #c4e2fc;
    border-color: #1a5080;
}

.panels {
    width: 369px;
    flex: none;
    display: grid;
    grid-template-rows: 1fr 302px;
    gap: 6px;
    margin: 4px 7px 0 5px;
}

.layers {
    background-color: #fff;
    overflow: hidden;
}

.layers h2 {
    height: 22px;
    padding-left: 5px;
    background-color: #1177c2;
    border-top: 1px solid #5cb0ee;
    color: #fff;
    line-height: 21px;
}

.layers th {
    height: 24px;
    padding: 0 0 0 5px;
}

.layers .profile {
    width: 102px;
    border-left: 1px solid #e4e4e4;
}

.layers td {
    height: 17px;
    line-height: 17px;
    padding-left: 4px;
}

.layers label {
    height: 17px;
    display: flex;
    align-items: center;
}

.layers .child {
    padding-left: 16px;
}

.layers input {
    appearance: none;
    width: 13px;
    height: 13px;
    flex: none;
    margin: 0 6px;
    border: 1px solid #333;
    background-color: #fff;
}

.chev {
    width: 10px;
    height: 10px;
}

.shape {
    width: 14px;
    height: 14px;
    margin-right: 5px;
}

.material {
    padding: 2px 9px 10px;
    background-color: #fff;
}

.material h2 {
    height: 28px;
    padding-left: 2px;
    line-height: 18px;
}

.material-box {
    height: 262px;
    padding: 3px;
    border: 1px solid #999;
}

.material-box p {
    line-height: 16px;
}

.material-box hr {
    margin: 14px 0 0;
    border: none;
    border-top: 1px solid #aaa;
}

/* drawing area */
.drawing {
    flex: 1;
    min-width: 0;
    display: flex;
    flex-direction: column;
    margin: 4px 5px 0 0;
}

.tabs {
    height: 24px;
    flex: none;
    display: flex;
    align-items: flex-end;
    font-family: "DejaVu Sans Condensed", "DejaVu Sans", sans-serif;
    font-size: 11px;
}

.tab-menu {
    width: 31px;
    height: 21px;
    display: flex;
    align-items: center;
    gap: 2px;
    padding-left: 1px;
    margin: 0 3px 2px 0;
    background-color: #e0e0e0;
}

.tab {
    width: 57px;
    height: 22px;
    background-color: #f0f0f0;
    border-bottom: 1px solid #888;
}

.tab.current {
    width: 63px;
    height: 24px;
    background-color: #fff;
    border-bottom: none;
}

.canvas-tools {
    height: 42px;
    flex: none;
    display: flex;
    align-items: center;
    gap: 6px;
    padding: 0 6px;
    background: linear-gradient(#fff, #efefef);
}

.view-tools {
    margin-left: auto;
    display: flex;
    align-items: center;
    gap: 7px;
}

.flat .face, .boxed .face {
    width: 24px;
    height: 24px;
}

.boxed {
    position: relative;
    width: 29px;
    height: 29px;
    display: flex;
    align-items: center;
    justify-content: center;
    border: 1px solid #aaa;
    background-color: #e2e2e2;
}

.boxed.active {
    background-color: #c4e2fc;
    border-color: #1a5080;
}

.boxed.split {
    width: 42px;
    gap: 4px;
}

.boxed .arrow {
    border-width: 4px;
    border-bottom: none;
}

.canvas-tools input {
    appearance: none;
    width: 148px;
    height: 21px;
    margin: 0;
    background: linear-gradient(#ddd, #ddd) center / 100% 4px no-repeat;
}

.canvas-tools input::-webkit-slider-thumb {
    appearance: none;
    width: 10px;
    height: 21px;
    background-color: #0078d7;
}

.canvas {
    flex: 1;
    min-height: 0;
    display: grid;
    grid-template-columns: 1fr 16px;
    grid-template-rows: 1fr 18px;
    background-color: #fff;
}

.plan {
    width: 100%;
    height: 100%;
}

.ruler-text {
    font: 11px "DejaVu Sans Condensed", "DejaVu Sans", sans-serif;
    text-anchor: middle;
    fill: #333;
}

.scroll-y {
    display: flex;
    flex-direction: column;
    align-items: center;
    padding: 4px 0;
    background-color: #f0f0f0;
}

.track {
    flex: 1;
    width: 14px;
    display: flex;
    flex-direction: column;
}

.thumb {
    height: 52%;
    margin-top: 193px;
    background-color: #cdcdcd;
}

.scroll-x {
    grid-column: 1 / 3;
    display: flex;
    align-items: center;
    justify-content: space-between;
    padding: 0 20px 0 3px;
    background-color: #f0f0f0;
}

.taskbar {
    height: 4px;
    flex: none;
    background-color: #06406c;
}

.taskbar span {
    display: block;
    width: 48px;
    height: 4px;
    margin-left: 38%;
    background-color: #1c6090;
}

/* 2D3D window */
.view-window {
    position: absolute;
    left: 107px;
    top: 514px;
    width: 526px;
    height: 510px;
    display: flex;
    flex-direction: column;
    border: 1px solid #9a9a9a;
    background-color: #fff;
    box-shadow: 1px 3px 10px rgba(0, 0, 0, 0.4);
}

.view-title {
    height: 30px;
    flex: none;
    display: flex;
    align-items: center;
    padding: 0 9px 0 7px;
    color: #999;
}

.view-title h2 {
    margin-left: 6px;
}

.view-title button {
    margin-left: auto;
}

.view-body {
    flex: 1;
    min-height: 0;
    display: grid;
    grid-template-columns: 150px 1fr;
    gap: 5px;
    padding: 5px 5px 5px 4px;
    background-color: #0b7680;
}

.view-left {
    display: grid;
    grid-template-rows: 190px 1fr;
    gap: 5px;
    min-width: 0;
}

.measurements, .planes {
    background-color: #fff;
    overflow: hidden;
}

.planes {
    display: flex;
    flex-direction: column;
}

.view-head {
    height: 37px;
    display: flex;
    align-items: center;
    justify-content: space-between;
    padding: 0 6px 0 5px;
    background-color: #f0f0f0;
}

.view-head h3, .planes h3, .view-foot {
    font-family: "DejaVu Sans Condensed", "DejaVu Sans", sans-serif;
    font-size: 11px;
}

.measure-row {
    height: 30px;
    display: flex;
    align-items: center;
    justify-content: space-between;
    padding: 0 4px 0 3px;
    background-color: #0073dc;
    color: #fff;
}

.eye {
    width: 15px;
    height: 12px;
}

.planes h3 {
    height: 26px;
    padding-left: 5px;
    line-height: 26px;
    background-color: #f0f0f0;
    border-bottom: 1px solid #aaa;
    white-space: nowrap;
}

.planes th {
    height: 39px;
    line-height: 14px;
    text-align: center;
    border-right: 1px solid #e8e8e8;
}

.planes .na {
    width: 22px;
}

.planes .offset {
    width: 43px;
}

.planes .thick {
    width: 62px;
}

.planes td {
    height: 30px;
    padding-left: 3px;
}

.planes .num {
    padding-right: 2px;
    text-align: right;
}

.selected {
    background-color: #0073dc;
    color: #fff;
}

.view-foot {
    height: 36px;
    margin-top: auto;
    padding: 8px 7px;
    background-color: #f0f0f0;
    border-top: 1px solid #aaa;
    text-align: right;
}

.view-foot button {
    width: 73px;
    height: 21px;
    border: 1px solid #adadad;
    background-color: #e1e1e1;
}

.view-right {
    min-width: 0;
    display: flex;
    flex-direction: column;
    background-color: #fff;
}

.view-tools-bar {
    height: 43px;
    flex: none;
    display: flex;
    align-items: center;
    gap: 7px;
    padding: 0 6px 0 7px;
    background-color: #f0f0f0;
}

.view-tools-bar .first {
    margin-right: auto;
}

.model {
    width: 100%;
    flex: 1;
}
```
